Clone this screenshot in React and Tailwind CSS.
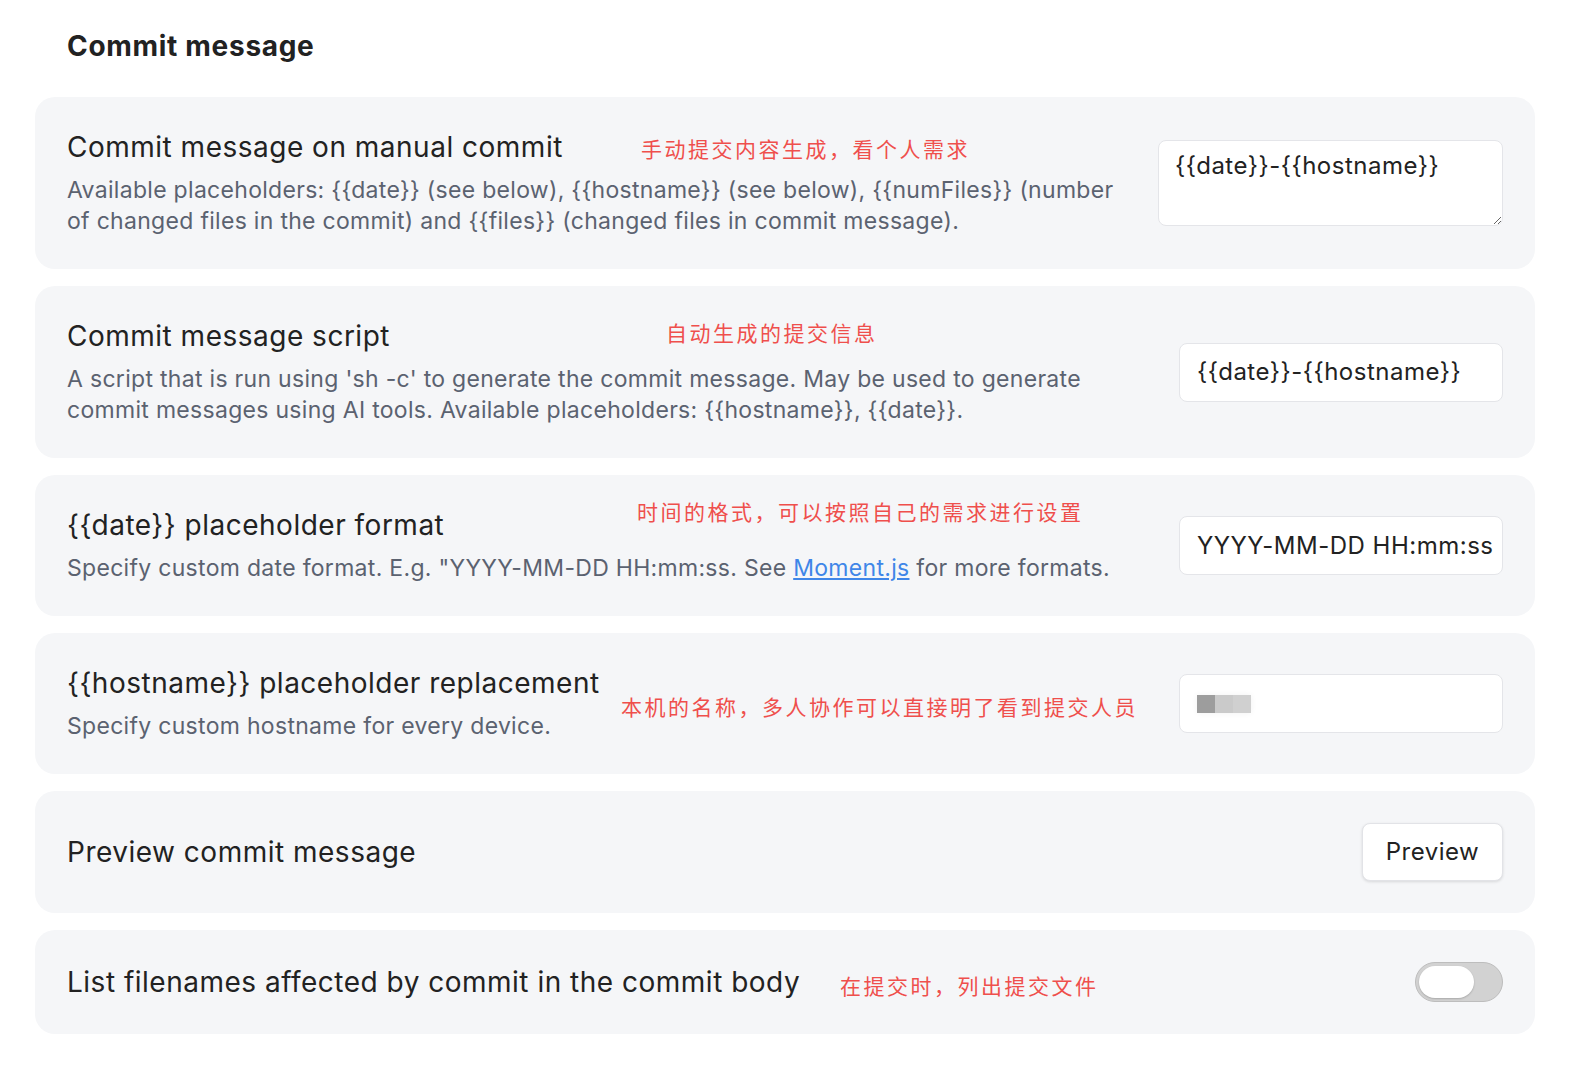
import React, { useState } from 'react';

const font = { fontFamily: 'Inter, "Noto Sans CJK SC", sans-serif' };

const Note = ({ children, className }) => (
  <span
    className={`pointer-events-none absolute text-[21px] leading-[28px] tracking-[2.5px] text-[#ef4f4c] whitespace-nowrap ${className}`}
    style={{ fontFamily: '"Noto Sans CJK SC", sans-serif' }}
  >
    {children}
  </span>
);

const Card = ({ children }) => (
  <div className='relative flex items-center justify-between rounded-[20px] bg-[#f5f6f8] px-8 py-8'>
    {children}
  </div>
);

const Title = ({ children }) => (
  <div className='text-[28px] leading-[36px] tracking-[0.5px] text-[#222222]'>{children}</div>
);

const Desc = ({ children }) => (
  <div className='mt-[10px] text-[23px] leading-[31px] tracking-[0.3px] text-[#5b6270]'>{children}</div>
);

const TextInput = ({ value, children }) => (
  <div className='ml-8 flex h-[59px] w-[324px] shrink-0 items-center rounded-[8px] border border-[#e4e5e9] bg-white px-[17px] text-[24px] tracking-[0.5px] text-[#222222] overflow-hidden whitespace-nowrap'>
    {children || value}
  </div>
);

export default function App() {
  const [listFiles, setListFiles] = useState(false);

  return (
    <div className='min-h-screen bg-white pl-[35px] pr-[37px] pt-[28px] pb-8' style={font}>
      <h2 className='px-8 text-[28px] font-bold leading-[36px] tracking-[0.7px] text-[#222222]'>Commit message</h2>

      <div className='mt-[33px] flex flex-col gap-[17px]'>
        <Card>
          <div className='flex-1'>
            <Title>Commit message on manual commit</Title>
            <Desc>
              {'Available placeholders: {{date}} (see below), {{hostname}} (see below), {{numFiles}} (number of changed files in the commit) and {{files}} (changed files in commit message).'}
            </Desc>
          </div>
          <textarea
            className='ml-8 h-[86px] w-[345px] shrink-0 rounded-[8px] border border-[#e4e5e9] bg-white px-[16px] pt-[10px] text-[24px] leading-[30px] tracking-[0.5px] text-[#222222] outline-none'
            defaultValue='{{date}}-{{hostname}}'
            style={font}
          />
          <Note className='left-[606px] top-[37px]'>手动提交内容生成，看个人需求</Note>
        </Card>

        <Card>
          <div className='flex-1'>
            <Title>Commit message script</Title>
            <Desc>
              {"A script that is run using 'sh -c' to generate the commit message. May be used to generate commit messages using AI tools. Available placeholders: {{hostname}}, {{date}}."}
            </Desc>
          </div>
          <TextInput value='{{date}}-{{hostname}}' />
          <Note className='left-[631px] top-[32px]'>自动生成的提交信息</Note>
        </Card>

        <Card>
          <div className='flex-1'>
            <Title>{'{{date}} placeholder format'}</Title>
            <Desc>
              {'Specify custom date format. E.g. "YYYY-MM-DD HH:mm:ss. See '}
              <a href='#' className='text-[#3f86e8] underline underline-offset-2'>Moment.js</a>
              {' for more formats.'}
            </Desc>
          </div>
          <TextInput value='YYYY-MM-DD HH:mm:ss' />
          <Note className='left-[602px] top-[22px]'>时间的格式，可以按照自己的需求进行设置</Note>
        </Card>

        <Card>
          <div className='flex-1'>
            <Title>{'{{hostname}} placeholder replacement'}</Title>
            <Desc>Specify custom hostname for every device.</Desc>
          </div>
          <TextInput>
            <div className='flex h-[18px] shadow-[0_0_6px_rgba(0,0,0,0.06)]'>
              <div className='w-[18px] bg-[#9d9d9d]' />
              <div className='w-[18px] bg-[#cacaca]' />
              <div className='w-[18px] bg-[#d0d0d0]' />
            </div>
          </TextInput>
          <Note className='left-[586px] top-[59px]'>本机的名称，多人协作可以直接明了看到提交人员</Note>
        </Card>

        <Card>
          <div className='flex-1'>
            <Title>Preview commit message</Title>
          </div>
          <button className='ml-8 h-[58px] w-[141px] shrink-0 rounded-[8px] border border-[#e2e3e7] bg-white text-[24px] tracking-[0.5px] text-[#222222] shadow-[0_1px_3px_rgba(0,0,0,0.12)]'>
            Preview
          </button>
        </Card>

        <div className='relative flex items-center justify-between rounded-[20px] bg-[#f5f6f8] px-8 py-[32px]'>
          <div className='flex-1'>
            <Title>List filenames affected by commit in the commit body</Title>
          </div>
          <button
            onClick={() => setListFiles(!listFiles)}
            className='ml-8 flex h-[40px] w-[88px] shrink-0 items-center rounded-full border border-[#bdbdbd] bg-[#d2d2d2] px-[3px]'
          >
            <span className='h-[32px] w-[55px] rounded-full bg-white shadow-[0_1px_2px_rgba(0,0,0,0.2)]' />
          </button>
          <Note className='left-[805px] top-[41px]'>在提交时，列出提交文件</Note>
        </div>
      </div>
    </div>
  );
}
